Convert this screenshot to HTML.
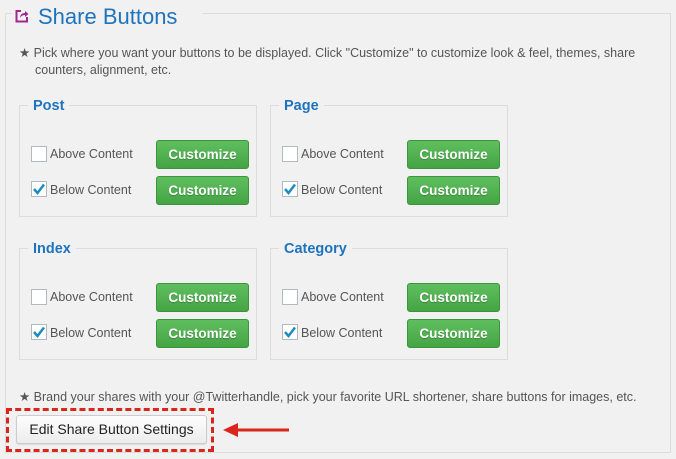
<!DOCTYPE html>
<html><head><style>
*{margin:0;padding:0;box-sizing:border-box}
body{width:676px;height:459px;background:#f1f1f1;font-family:"Liberation Sans",sans-serif;position:relative;overflow:hidden;color:#444}
.abs{position:absolute}
.outer{left:5px;top:13px;width:666px;height:440px;border:1px solid #dcdcdc}
.t{font-size:12.5px;color:#555;white-space:nowrap}
.box{position:absolute;width:238px;height:112px;border:1px solid #dcdcdc}
.leg{position:absolute;top:-8px;left:8px;background:#f1f1f1;padding:0 5px;color:#1e73be;font-weight:bold;font-size:14.5px}
.cb{position:absolute;left:11px;width:16px;height:16px;border:1px solid #b4b9be;background:#fff}
.lab{position:absolute;left:30px;font-size:12.5px;color:#555}
.btn{position:absolute;left:136px;width:93px;height:29px;border-radius:3px;background:linear-gradient(#5fbf5f,#45a545);border:1px solid #3c953c;color:#fff;font-weight:bold;font-size:13.5px;text-align:center;line-height:27px;text-shadow:0 1px 1px rgba(0,0,0,.25)}
</style></head><body>
<div class="abs outer"></div>
<div class="abs" style="left:12px;top:2px;width:190px;height:28px;background:#f1f1f1"></div>
<svg class="abs" style="left:15px;top:9px" width="14" height="14" viewBox="0 0 14 14"><path d="M6 2H1.5V12.5H12V8" fill="none" stroke="#a0278f" stroke-width="2"/><path d="M5 9C5 5 8 4 10 4V2L13.5 5 10 8V6C8 6 6 7 5 9Z" fill="#a0278f"/></svg>
<div class="abs" style="left:38px;top:4px;font-size:22px;color:#1e73be">Share Buttons</div>
<div class="abs t" style="left:19px;top:45px">★ Pick where you want your buttons to be displayed. Click "Customize" to customize look &amp; feel, themes, share</div>
<div class="abs t" style="left:35px;top:63px">counters, alignment, etc.</div>

<div class="box" style="left:19px;top:105px"><div class="leg">Post</div>
<div class="cb" style="top:40px"></div><div class="lab" style="top:41px">Above Content</div><div class="btn" style="top:34px">Customize</div>
<div class="cb" style="top:75px"><svg width="14" height="14" viewBox="0 0 14 14" style="position:absolute;left:0;top:0"><path d="M2 7L5.5 11 12 2.5" fill="none" stroke="#1e8cbe" stroke-width="2.5"/></svg></div><div class="lab" style="top:77px">Below Content</div><div class="btn" style="top:70px">Customize</div></div>

<div class="box" style="left:270px;top:105px"><div class="leg">Page</div>
<div class="cb" style="top:40px"></div><div class="lab" style="top:41px">Above Content</div><div class="btn" style="top:34px">Customize</div>
<div class="cb" style="top:75px"><svg width="14" height="14" viewBox="0 0 14 14" style="position:absolute;left:0;top:0"><path d="M2 7L5.5 11 12 2.5" fill="none" stroke="#1e8cbe" stroke-width="2.5"/></svg></div><div class="lab" style="top:77px">Below Content</div><div class="btn" style="top:70px">Customize</div></div>

<div class="box" style="left:19px;top:248px"><div class="leg">Index</div>
<div class="cb" style="top:40px"></div><div class="lab" style="top:41px">Above Content</div><div class="btn" style="top:34px">Customize</div>
<div class="cb" style="top:75px"><svg width="14" height="14" viewBox="0 0 14 14" style="position:absolute;left:0;top:0"><path d="M2 7L5.5 11 12 2.5" fill="none" stroke="#1e8cbe" stroke-width="2.5"/></svg></div><div class="lab" style="top:77px">Below Content</div><div class="btn" style="top:70px">Customize</div></div>

<div class="box" style="left:270px;top:248px"><div class="leg">Category</div>
<div class="cb" style="top:40px"></div><div class="lab" style="top:41px">Above Content</div><div class="btn" style="top:34px">Customize</div>
<div class="cb" style="top:75px"><svg width="14" height="14" viewBox="0 0 14 14" style="position:absolute;left:0;top:0"><path d="M2 7L5.5 11 12 2.5" fill="none" stroke="#1e8cbe" stroke-width="2.5"/></svg></div><div class="lab" style="top:77px">Below Content</div><div class="btn" style="top:70px">Customize</div></div>

<div class="abs t" style="left:19px;top:389px">★ Brand your shares with your @Twitterhandle, pick your favorite URL shortener, share buttons for images, etc.</div>
<div class="abs" style="left:6px;top:408px;width:208px;height:44px;border:3px dashed #d9261c"></div>
<div class="abs" style="left:16px;top:415px;width:191px;height:29px;border:1px solid #ccc;border-radius:3px;background:linear-gradient(#fdfdfd,#ececec);box-shadow:0 1px 1px rgba(0,0,0,.1);text-align:center;line-height:27px;font-size:14px;color:#222">Edit Share Button Settings</div>
<svg class="abs" style="left:222px;top:422px" width="70" height="16"><path d="M14 8H67" stroke="#d9261c" stroke-width="3"/><path d="M1 8L16 1V15Z" fill="#d9261c"/></svg>
</body></html>
